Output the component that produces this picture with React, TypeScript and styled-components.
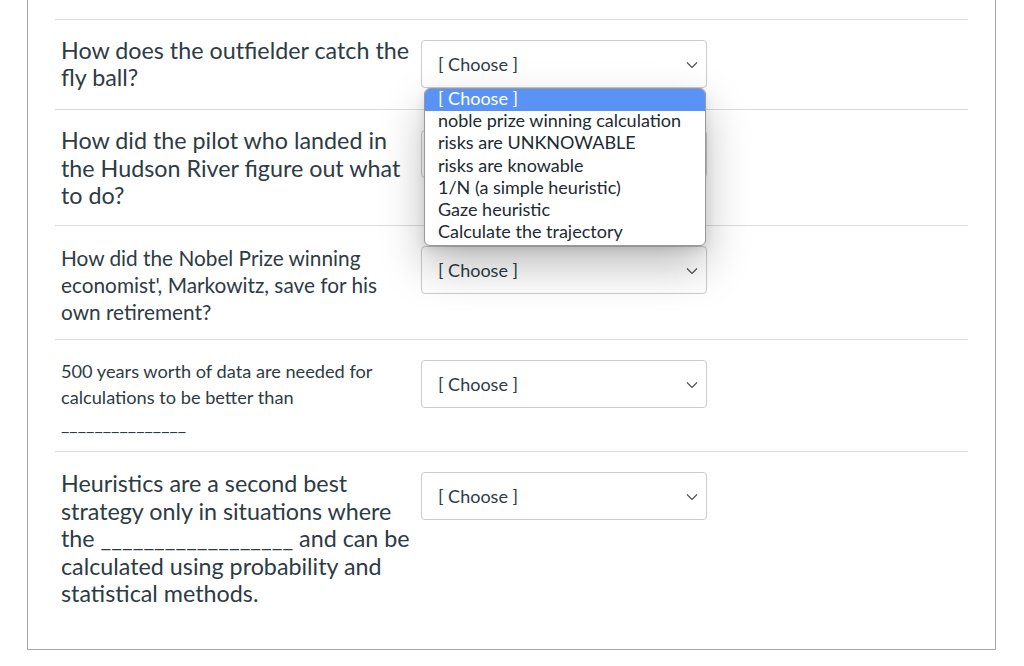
import React from "react";
import styled, { createGlobalStyle } from "styled-components";

const Global = createGlobalStyle`
  html, body { margin: 0; padding: 0; background: #ffffff; }
  body { font-family: Lato, "Open Sans", "Liberation Sans", sans-serif; color: #2d3b45; }
`;

const Page = styled.div`
  padding: 0 0 0 27px;
`;

const Box = styled.div`
  width: 969px;
  box-sizing: border-box;
  border: 1px solid #a8a8a8;
  border-top: none;
  padding: 19px 27px 25px;
`;

const Row = styled.div<{ $pb: number }>`
  display: flex;
  align-items: flex-start;
  border-top: 1px solid #dcdcdc;
  padding: 20px 6px ${(p) => p.$pb}px;
`;

const Question = styled.div<{ $size: number; $lh: number; $mt: number }>`
  width: 356px;
  margin-right: 4px;
  margin-top: ${(p) => p.$mt}px;
  font-size: ${(p) => p.$size}px;
  line-height: ${(p) => p.$lh}px;
  color: #2d3b45;
`;

const SelectWrap = styled.div`
  position: relative;
  width: 286px;
  flex: none;
`;

const SelectBox = styled.div`
  box-sizing: border-box;
  height: 48px;
  border: 1px solid #c7cdd1;
  border-radius: 4px;
  background: #ffffff;
  display: flex;
  align-items: center;
  justify-content: space-between;
  padding: 0 8px 0 16px;
  font-size: 18px;
  color: #2d3b45;
`;

const Chevron = styled.svg`
  width: 12px;
  height: 8px;
  margin-top: 2px;
`;

const Dropdown = styled.ul`
  position: absolute;
  left: 3px;
  top: 48px;
  width: 282px;
  box-sizing: border-box;
  margin: 0;
  padding: 0 0 1px;
  list-style: none;
  background: #ffffff;
  border: 1px solid #999999;
  border-radius: 6px;
  overflow: hidden;
  box-shadow: 0 20px 44px rgba(0, 0, 0, 0.26), 0 4px 10px rgba(0, 0, 0, 0.1);
  z-index: 10;
`;

const Option = styled.li<{ $active?: boolean }>`
  height: 22.2px;
  line-height: 19px;
  padding-left: 13px;
  font-size: 18px;
  white-space: nowrap;
  background: ${(p) => (p.$active ? "#5a93f6" : "transparent")};
  color: ${(p) => (p.$active ? "#ffffff" : "#1c2a33")};
`;

const options = [
  "[ Choose ]",
  "noble prize winning calculation",
  "risks are UNKNOWABLE",
  "risks are knowable",
  "1/N (a simple heuristic)",
  "Gaze heuristic",
  "Calculate the trajectory",
];

function Select({ open }: { open?: boolean }) {
  return (
    <SelectWrap>
      <SelectBox>
        <span>[ Choose ]</span>
        <Chevron viewBox="0 0 12 8">
          <path d="M1 1.5 L6 6.5 L11 1.5" fill="none" stroke="#4a4a4a" strokeWidth="1.1" />
        </Chevron>
      </SelectBox>
      {open && (
        <Dropdown>
          {options.map((o, i) => (
            <Option key={o} $active={i === 0}>
              {o}
            </Option>
          ))}
        </Dropdown>
      )}
    </SelectWrap>
  );
}

export default function App() {
  return (
    <>
      <Global />
      <Page>
        <Box>
          <Row $pb={18}>
            <Question $size={23.3} $lh={27} $mt={-3}>
              How does the outfielder catch the fly ball?
            </Question>
            <Select open />
          </Row>
          <Row $pb={15}>
            <Question $size={23.3} $lh={27.5} $mt={-3}>
              How did the pilot who landed in the Hudson River figure out what to do?
            </Question>
            <Select />
          </Row>
          <Row $pb={14}>
            <Question $size={20.8} $lh={27} $mt={-2}>
              How did the Nobel Prize winning economist', Markowitz, save for his own retirement?
            </Question>
            <Select />
          </Row>
          <Row $pb={14}>
            <Question $size={18.2} $lh={26.5} $mt={-2}>
              500 years worth of data are needed for calculations to be better than _______________
            </Question>
            <Select />
          </Row>
          <Row $pb={16}>
            <Question $size={23.3} $lh={27.5} $mt={-2}>
              Heuristics are a second best strategy only in situations where the __________________ and can be calculated using probability and statistical methods.
            </Question>
            <Select />
          </Row>
        </Box>
      </Page>
    </>
  );
}
